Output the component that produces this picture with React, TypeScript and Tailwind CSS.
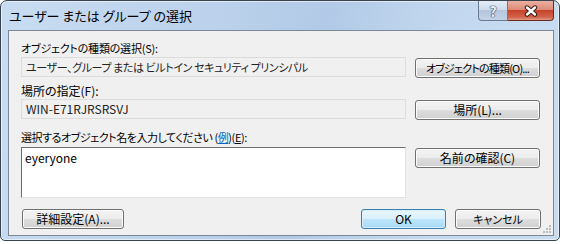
const btn =
  "flex h-[20px] shrink-0 items-center justify-center whitespace-nowrap rounded-[3px] border border-[#707070] bg-[linear-gradient(#f3f3f3_0%,#ececec_50%,#dddddd_51%,#d0d0d0_100%)] shadow-[inset_0_0_0_1px_#fbfbfb] text-[12px] leading-none text-black";

const field =
  "flex h-[20px] w-[385px] shrink-0 items-center whitespace-nowrap border border-[#dcdcdc] bg-[#f0f0f0] pl-[4px] text-[12px] text-[#222]";

export default function App() {
  return (
    <div className="h-[244px] w-[563px] overflow-hidden bg-white font-['Noto_Sans_CJK_JP',sans-serif] [font-feature-settings:'palt']">
      <div className="flex h-[241px] w-[560px] flex-col rounded-t-[7px] rounded-b-[5px] border border-[#3a4350] bg-[linear-gradient(100deg,#c8dcf1_0%,#bcd2ec_35%,#b2cae7_55%,#c3d8ef_75%,#c9dcf1_100%)] shadow-[inset_0_0_0_1px_rgba(255,255,255,0.55)]">
        {/* Title bar */}
        <div className="flex h-[29px] shrink-0 items-start justify-between pr-[5px]">
          <span className="ml-[8px] mt-[7px] text-[13px] leading-[16px] text-black">
            ユーザー または グループ の選択
          </span>
          <div className="flex">
            <div className="flex h-[20px] w-[30px] items-center justify-center rounded-bl-[4px] border border-t-0 border-[#6b7a90] bg-[linear-gradient(#e4ecf6_0%,#cfdcec_45%,#b4c5dc_50%,#c3d3e8_100%)]">
              <span className="text-[14px] font-bold leading-none text-[#eef2f7] [text-shadow:0_0_1px_#2c3a4e,0_0_1px_#2c3a4e,0_0_1px_#2c3a4e]">
                ?
              </span>
            </div>
            <div className="flex h-[20px] w-[46px] items-center justify-center rounded-br-[4px] border border-l-0 border-t-0 border-[#6b2a20] bg-[linear-gradient(#eab0a2_0%,#de8b76_45%,#c7432b_50%,#d2634a_85%,#e49a86_100%)]">
              <svg width="16" height="12" viewBox="0 0 16 12">
                <path d="M4 2.5 L12 9.5 M12 2.5 L4 9.5" stroke="#3a1a14" strokeWidth="4.4" strokeLinecap="round" />
                <path d="M4 2.5 L12 9.5 M12 2.5 L4 9.5" stroke="#ffffff" strokeWidth="2.4" strokeLinecap="round" />
              </svg>
            </div>
          </div>
        </div>

        {/* Client area */}
        <div className="relative mb-[4px] ml-[7px] mr-[5px] flex flex-1 flex-col border border-[#7b8898] bg-[#f0f0f0] pl-[12px] pr-[12px] pt-[10px] text-[12px] text-black">
          <div className="h-[14px] text-[11px] leading-[14px] tracking-[-0.2px]">オブジェクトの種類の選択(S):</div>
          <div className="mt-[2px] flex items-start gap-[9px]">
            <div className={field}>
              <span className="text-[11px] tracking-[-0.4px]">ユーザー、グループ または ビルトイン セキュリティ プリンシパル</span>
            </div>
            <button className={`${btn} mt-[1px] w-[125px]`}>
              <span className="text-[11px] tracking-[-0.8px]">オブジェクトの種類(O)...</span>
            </button>
          </div>

          <div className="mt-[6px] h-[14px] leading-[14px]">場所の指定(F):</div>
          <div className="mt-[1px] flex items-start gap-[9px]">
            <div className={field}>WIN-E71RJRSRSVJ</div>
            <button className={`${btn} mt-[1px] w-[125px]`}>場所(L)...</button>
          </div>

          <div className="mt-[10px] h-[14px] whitespace-nowrap text-[11px] leading-[14px] tracking-[-0.45px]">
            選択するオブジェクト名を入力してください (
            <span className="text-[#0066cc] underline">例</span>)(<span className="underline">E</span>):
          </div>
          <div className="mt-[3px] flex items-start gap-[9px]">
            <div className="h-[51px] w-[385px] shrink-0 border border-b-[#e3e3e3] border-l-[#6e6e6e] border-r-[#e3e3e3] border-t-[#6e6e6e] bg-white pl-[3px] pt-[3px] leading-[14px] text-black">
              eyeryone
            </div>
            <button className={`${btn} mt-[1px] w-[125px]`}>名前の確認(C)</button>
          </div>

          <div className="mt-[11px] flex items-start">
            <button className={`${btn} ml-[1px] w-[102px]`}>詳細設定(A)...</button>
            <div className="flex-1" />
            <button className="flex h-[20px] w-[85px] shrink-0 items-center justify-center rounded-[3px] border border-[#3c7fb1] bg-[linear-gradient(#eaf6fd_0%,#d9f0fc_50%,#bee6fd_51%,#a7d9f5_100%)] shadow-[inset_0_0_0_1px_#d4eefc] text-[12px] leading-none text-black">
              OK
            </button>
            <button className={`${btn} ml-[9px] w-[86px]`}>
              <span className="text-[11px]">キャンセル</span>
            </button>
          </div>

          {/* size grip */}
          <svg className="absolute bottom-[1px] right-[1px]" width="10" height="10" viewBox="0 0 10 10">
            {[
              [7, 1],
              [4, 4],
              [7, 4],
              [1, 7],
              [4, 7],
              [7, 7],
            ].map(([x, y]) => (
              <rect key={`${x}-${y}`} x={x} y={y} width="2" height="2" fill="#b8bcc2" />
            ))}
          </svg>
        </div>
      </div>
    </div>
  );
}
